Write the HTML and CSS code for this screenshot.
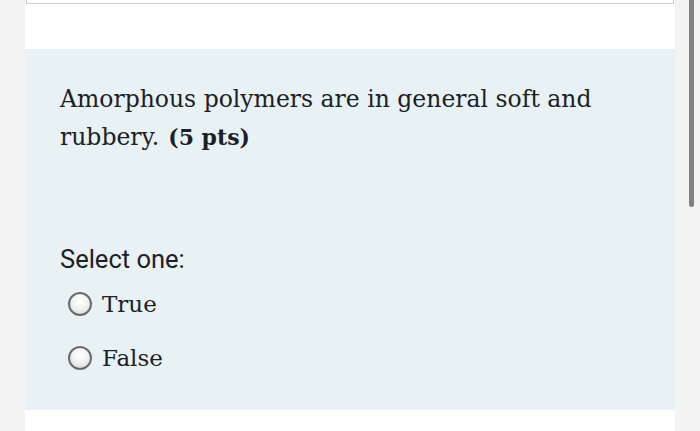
FILE: index.html
```html
<!DOCTYPE html>
<html>
<head>
<meta charset="utf-8">
<link rel="stylesheet" href="styles.css">
</head>
<body>
<div class="page">
  <div class="prev-box"></div>
  <div class="gap"></div>
  <div class="question">
    <p class="qtext">Amorphous polymers are in general soft and<br>rubbery.<b class="pts">(5 pts)</b></p>
    <p class="prompt">Select one:</p>
    <div class="options">
      <label class="option"><span class="radio"></span><span class="label">True</span></label>
      <label class="option"><span class="radio"></span><span class="label">False</span></label>
    </div>
  </div>
  <div class="after"></div>
</div>
<div class="scrollbar"></div>
</body>
</html>
```
FILE: styles.css
```css
html, body {
  margin: 0;
  padding: 0;
  background: #f3f3f3;
  height: 431px;
  overflow: hidden;
}
.page {
  margin-left: 25px;
  width: 650px;
  background: #ffffff;
  height: 431px;
  display: flex;
  flex-direction: column;
}
.prev-box {
  margin: 0 1px;
  border: 1px solid #cfcfcf;
  border-top: none;
  box-sizing: border-box;
  height: 4px;
}
.gap {
  height: 45px;
}
.question {
  background: #e8f2f5;
  height: 361px;
  box-sizing: border-box;
  padding: 31px 35px 0 35px;
  color: #1d2125;
}
.qtext {
  margin: 0;
  font-family: "DejaVu Serif", serif;
  font-size: 23.5px;
  line-height: 38px;
  width: 570px;
}
.pts {
  font-weight: bold;
  font-size: 22px;
  margin-left: 9px;
}
.prompt {
  margin: 85px 0 0 0;
  font-family: Roboto, sans-serif;
  font-size: 25.5px;
  line-height: 36px;
}
.options {
  display: flex;
  flex-direction: column;
  gap: 18px;
  margin-top: 9px;
  margin-left: 8px;
}
.option {
  display: flex;
  align-items: center;
  gap: 10px;
  font-family: "DejaVu Serif", serif;
  font-size: 23px;
  line-height: 36px;
}
.radio {
  width: 24px;
  height: 24px;
  border-radius: 50%;
  border: 2px solid #6b6b6b;
  box-sizing: border-box;
  background: radial-gradient(circle at 50% 35%, #ffffff 0%, #f2f2f2 45%, #cfcfcf 100%);
}
.scrollbar {
  position: absolute;
  left: 689px;
  top: 0;
  width: 5px;
  height: 207px;
  background: #808080;
  border-radius: 0 0 3px 3px;
}
```
